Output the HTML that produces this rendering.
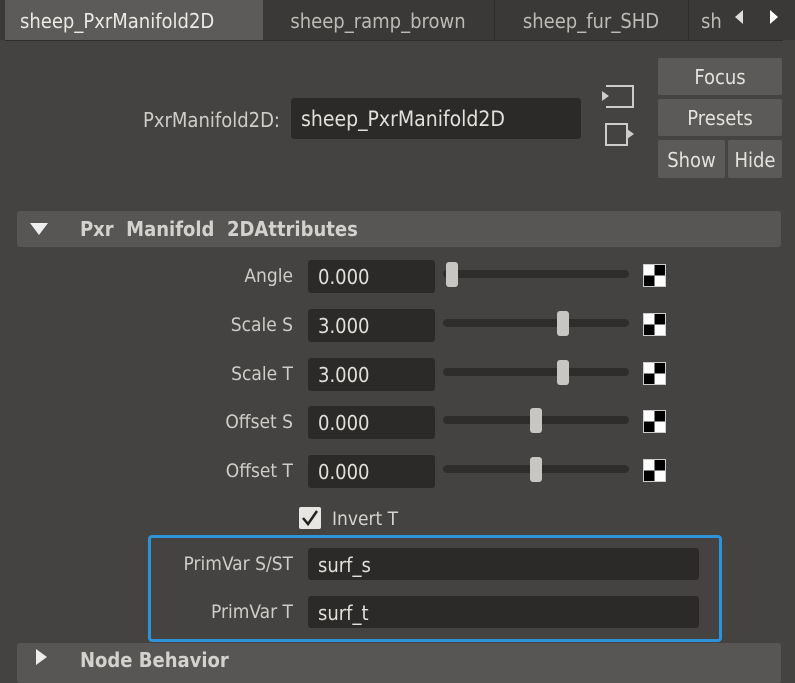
<!DOCTYPE html><html><head><style>
body{margin:0;width:795px;height:678px;background:#454341;font-family:"Liberation Sans Narrow","DejaVu Sans Condensed","Liberation Sans",sans-serif;position:relative;overflow:hidden;color:#d6d4d0}
.a{position:absolute}
.tab{position:absolute;top:0;height:40px;line-height:42px;font-size:20px;text-align:center;color:#bdbbb7;background:#3b3937}
.fld{position:absolute;background:#2c2a28;border-radius:3px;font-size:20px;color:#e2e0dc;padding-left:10px;box-sizing:border-box}
.lbl{position:absolute;font-size:19px;color:#cfcdc9;text-align:right}
.btn{position:absolute;background:#5c5a58;text-align:center;font-size:20px;color:#e4e2de;border-radius:2px}
.trk{position:absolute;left:443px;width:186px;height:8px;background:#2f2d2b;border-radius:4px}
.th{position:absolute;width:12px;height:25px;background:#c8c6c2;border-radius:3px}
.ck{position:absolute;left:643px}
</style></head><body>
<div class="a" style="left:0;top:0;width:795px;height:40px;background:#3b3937"></div>
<div class="tab" style="left:5px;width:258px;background:#5d5b59;color:#eceae6;text-align:left;padding-left:15px;box-sizing:border-box">sheep_PxrManifold2D</div>
<div class="tab" style="left:264px;width:228px">sheep_ramp_brown</div>
<div class="tab" style="left:494px;width:192px;border-left:1px solid #2f2d2b">sheep_fur_SHD</div>
<div class="tab" style="left:688px;width:40px;border-left:1px solid #2f2d2b;text-align:left;padding-left:12px;overflow:hidden">sh</div>
<div class="a" style="left:735px;top:10px;width:0;height:0;border:7px solid transparent;border-right:8px solid #ddd;border-left:0"></div>
<div class="a" style="left:770px;top:10px;width:0;height:0;border:7px solid transparent;border-left:8px solid #fff;border-right:0"></div>
<div class="a" style="left:5px;top:40px;width:778px;height:1px;background:#2f2d2b"></div>
<div class="lbl" style="left:100px;width:180px;top:108px;font-size:20px">PxrManifold2D:</div>
<div class="fld" style="left:291px;top:98px;width:290px;height:41px;line-height:43px;font-size:21px">sheep_PxrManifold2D</div>
<svg class="a" style="left:600px;top:83px" width="36" height="70"><path d="M6 3H33V24H6" fill="none" stroke="#ccc" stroke-width="2"/><path d="M2 8L9 13L2 18Z" fill="#ccc"/><path d="M6 41H27V62H6Z" fill="none" stroke="#ccc" stroke-width="2"/><path d="M27 46L34 51L27 56Z" fill="#ccc"/></svg>
<div class="btn" style="left:658px;top:58px;width:124px;height:37px;line-height:38px">Focus</div>
<div class="btn" style="left:658px;top:99px;width:124px;height:37px;line-height:38px">Presets</div>
<div class="btn" style="left:658px;top:140px;width:67px;height:38px;line-height:40px">Show</div>
<div class="btn" style="left:728px;top:140px;width:54px;height:38px;line-height:40px">Hide</div>
<div class="a" style="left:17px;top:211px;width:764px;height:36px;background:#585654;border-radius:3px"></div>
<div class="a" style="left:30px;top:223px;border:9px solid transparent;border-top:12px solid #eee;border-bottom:0"></div>
<div class="a" style="left:80px;top:217px;font-size:20px;font-weight:bold;color:#d4d2ce">Pxr&nbsp; Manifold&nbsp; 2DAttributes</div>

<div class="lbl" style="left:150px;width:143px;top:265px">Angle</div><div class="fld" style="left:308px;top:260px;width:127px;height:33px;line-height:35px">0.000</div><div class="trk" style="top:270px"></div><div class="th" style="left:446px;top:262px"></div><svg class="ck" style="top:264px" width="23" height="23"><rect x="0.5" y="0.5" width="22" height="22" fill="#fff" stroke="#ccc"/><rect x="11.5" y="1" width="10.5" height="10.5"/><rect x="1" y="11.5" width="10.5" height="10.5"/></svg>
<div class="lbl" style="left:150px;width:143px;top:314px">Scale S</div><div class="fld" style="left:308px;top:309px;width:127px;height:33px;line-height:35px">3.000</div><div class="trk" style="top:319px"></div><div class="th" style="left:557px;top:311px"></div><svg class="ck" style="top:313px" width="23" height="23"><rect x="0.5" y="0.5" width="22" height="22" fill="#fff" stroke="#ccc"/><rect x="11.5" y="1" width="10.5" height="10.5"/><rect x="1" y="11.5" width="10.5" height="10.5"/></svg>
<div class="lbl" style="left:150px;width:143px;top:363px">Scale T</div><div class="fld" style="left:308px;top:358px;width:127px;height:33px;line-height:35px">3.000</div><div class="trk" style="top:368px"></div><div class="th" style="left:557px;top:360px"></div><svg class="ck" style="top:362px" width="23" height="23"><rect x="0.5" y="0.5" width="22" height="22" fill="#fff" stroke="#ccc"/><rect x="11.5" y="1" width="10.5" height="10.5"/><rect x="1" y="11.5" width="10.5" height="10.5"/></svg>
<div class="lbl" style="left:150px;width:143px;top:411px">Offset S</div><div class="fld" style="left:308px;top:406px;width:127px;height:33px;line-height:35px">0.000</div><div class="trk" style="top:416px"></div><div class="th" style="left:530px;top:408px"></div><svg class="ck" style="top:410px" width="23" height="23"><rect x="0.5" y="0.5" width="22" height="22" fill="#fff" stroke="#ccc"/><rect x="11.5" y="1" width="10.5" height="10.5"/><rect x="1" y="11.5" width="10.5" height="10.5"/></svg>
<div class="lbl" style="left:150px;width:143px;top:460px">Offset T</div><div class="fld" style="left:308px;top:455px;width:127px;height:33px;line-height:35px">0.000</div><div class="trk" style="top:465px"></div><div class="th" style="left:530px;top:457px"></div><svg class="ck" style="top:459px" width="23" height="23"><rect x="0.5" y="0.5" width="22" height="22" fill="#fff" stroke="#ccc"/><rect x="11.5" y="1" width="10.5" height="10.5"/><rect x="1" y="11.5" width="10.5" height="10.5"/></svg>

<div class="a" style="left:299px;top:507px;width:22px;height:22px;background:#e8e6e2;border-radius:2px"></div>
<svg class="a" style="left:299px;top:507px" width="22" height="22"><path d="M4 11L9 17L18 4" fill="none" stroke="#222" stroke-width="2.5"/></svg>
<div class="a" style="left:332px;top:508px;font-size:19px;color:#d6d4d0">Invert T</div>

<div class="a" style="left:148px;top:535px;width:568px;height:101px;border:3px solid #2e93d6;border-radius:4px"></div>
<div class="lbl" style="left:150px;width:143px;top:553px">PrimVar S/ST</div><div class="fld" style="left:308px;top:548px;width:391px;height:32px;line-height:34px">surf_s</div>
<div class="lbl" style="left:150px;width:143px;top:601px">PrimVar T</div><div class="fld" style="left:308px;top:596px;width:391px;height:32px;line-height:34px">surf_t</div>

<div class="a" style="left:17px;top:643px;width:764px;height:40px;background:#585654;border-radius:3px"></div>
<div class="a" style="left:36px;top:649px;border:8px solid transparent;border-left:11px solid #eee;border-right:0"></div>
<div class="a" style="left:80px;top:648px;font-size:20px;font-weight:bold;color:#d4d2ce">Node Behavior</div>
</body></html>
